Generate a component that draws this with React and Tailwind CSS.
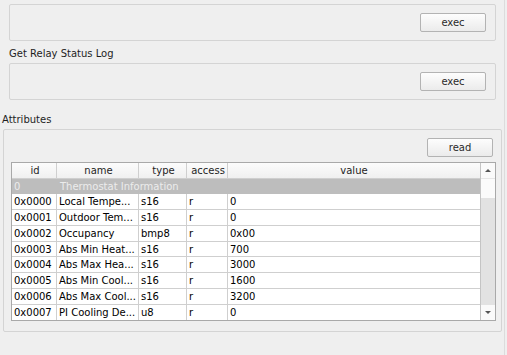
import React from "react";

// Attribute rows shown in the table
const rows = [
  { id: "0x0000", name: "Local Tempe...", type: "s16", access: "r", value: "0" },
  { id: "0x0001", name: "Outdoor Tem...", type: "s16", access: "r", value: "0" },
  { id: "0x0002", name: "Occupancy", type: "bmp8", access: "r", value: "0x00" },
  { id: "0x0003", name: "Abs Min Heat...", type: "s16", access: "r", value: "700" },
  { id: "0x0004", name: "Abs Max Hea...", type: "s16", access: "r", value: "3000" },
  { id: "0x0005", name: "Abs Min Cool...", type: "s16", access: "r", value: "1600" },
  { id: "0x0006", name: "Abs Max Cool...", type: "s16", access: "r", value: "3200" },
  { id: "0x0007", name: "PI Cooling De...", type: "u8", access: "r", value: "0" },
];

function Button({ children }) {
  return (
    <button className="w-[66px] h-[19px] rounded-[2px] border border-[#b3b3b3] bg-gradient-to-b from-[#fdfdfd] to-[#ebebeb] text-[10px] leading-none text-[#2a2a2a]">
      {children}
    </button>
  );
}

function CommandBox({ label }) {
  return (
    <div className="flex flex-col pl-[9px] pr-[11px]">
      <div className="h-[14px] leading-[14px] text-[#1e1e1e]">{label}</div>
      <div className="mt-[2px] h-[37px] rounded-[2px] border border-[#d4d4d4] flex items-center justify-end pr-[9px]">
        <Button>exec</Button>
      </div>
    </div>
  );
}

function Cell({ w, children, className = "" }) {
  return (
    <div className={`${w} shrink-0 border-r border-[#cfcfcf] pl-[2px] overflow-hidden whitespace-nowrap ${className}`}>
      {children}
    </div>
  );
}

export default function App() {
  return (
    <div
      className="w-[507px] h-[355px] overflow-hidden bg-[#efefef] text-[10px] relative"
      style={{ fontFamily: '"DejaVu Sans", sans-serif' }}
    >
      <div className="absolute top-0 bottom-0 right-[2px] w-px bg-[#dcdcdc]" />
      <div className="flex flex-col mt-[-12px]">
        <CommandBox label="Clear Weekly Schedule" />
        <div className="h-[6px]" />
        <CommandBox label="Get Relay Status Log" />

        {/* Attributes group */}
        <div className="mt-[13px] pl-[2px] h-[14px] leading-[14px] text-[#1e1e1e]">Attributes</div>
        <div className="mt-[2px] ml-[3px] w-[499px] h-[203px] rounded-[2px] border border-[#d4d4d4] flex flex-col pl-[7px] pr-[5px]">
          <div className="flex justify-end mt-[8px] pr-[3px]">
            <Button>read</Button>
          </div>
          <div className="mt-[5px] h-[159px] border border-[#a9a9a9] bg-white flex">
            <div className="flex-1 flex flex-col">
              {/* header */}
              <div className="flex h-[16px] leading-[15px] border-b border-[#cfcfcf] bg-gradient-to-b from-[#fcfcfc] to-[#f0f0f0] text-[#1e1e1e] text-center">
                <Cell w="w-[45px]" className="pl-0">id</Cell>
                <Cell w="w-[82px]" className="pl-0">name</Cell>
                <Cell w="w-[48px]" className="pl-0">type</Cell>
                <Cell w="w-[41px]" className="pl-0">access</Cell>
                <div className="flex-1">value</div>
              </div>
              <div className="flex h-[15.75px] leading-[15px] bg-[#bdbdbd] text-[#ececec]">
                <div className="w-[45px] shrink-0 pl-[2px]">0</div>
                <div className="pl-[3px] whitespace-nowrap">Thermostat Information</div>
              </div>
              {rows.map((r) => (
                <div key={r.id} className="flex h-[15.75px] leading-[15px] border-b border-[#cfcfcf] text-black last:border-b-0">
                  <Cell w="w-[45px]">{r.id}</Cell>
                  <Cell w="w-[82px]">{r.name}</Cell>
                  <Cell w="w-[48px]">{r.type}</Cell>
                  <Cell w="w-[41px]">{r.access}</Cell>
                  <div className="flex-1 pl-[2px]">{r.value}</div>
                </div>
              ))}
            </div>
            {/* vertical scrollbar */}
            <div className="w-[15px] shrink-0 border-l border-[#c4c4c4] bg-[#e2e2e2] flex flex-col">
              <div className="h-[15px] bg-[#fafafa] flex items-center justify-center">
                <div className="w-0 h-0 border-l-[3px] border-r-[3px] border-b-[3px] border-l-transparent border-r-transparent border-b-[#555]" />
              </div>
              <div className="h-[20px] bg-[#fbfbfb] border-t border-[#e6e6e6]" />
              <div className="flex-1" />
              <div className="h-[15px] bg-[#fafafa] flex items-center justify-center">
                <div className="w-0 h-0 border-l-[3px] border-r-[3px] border-t-[3px] border-l-transparent border-r-transparent border-t-[#555]" />
              </div>
            </div>
          </div>
        </div>
      </div>
    </div>
  );
}
